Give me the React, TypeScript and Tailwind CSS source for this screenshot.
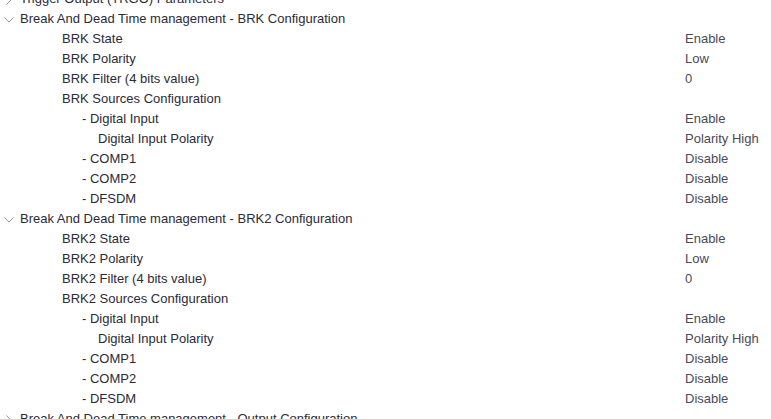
import React from "react";

type Row = { label: string; value?: string; indent: number; header?: "open" | "closed" };

const section = (n: string): Row[] => [
  { label: `${n} State`, value: "Enable", indent: 62 },
  { label: `${n} Polarity`, value: "Low", indent: 62 },
  { label: `${n} Filter (4 bits value)`, value: "0", indent: 62 },
  { label: `${n} Sources Configuration`, indent: 62 },
  { label: "- Digital Input", value: "Enable", indent: 82 },
  { label: "Digital Input Polarity", value: "Polarity High", indent: 98 },
  { label: "- COMP1", value: "Disable", indent: 82 },
  { label: "- COMP2", value: "Disable", indent: 82 },
  { label: "- DFSDM", value: "Disable", indent: 82 },
];

const rows: Row[] = [
  { label: "Trigger Output (TRGO) Parameters", indent: 20, header: "closed" },
  { label: "Break And Dead Time management - BRK Configuration", indent: 20, header: "open" },
  ...section("BRK"),
  { label: "Break And Dead Time management - BRK2 Configuration", indent: 20, header: "open" },
  ...section("BRK2"),
  { label: "Break And Dead Time management - Output Configuration", indent: 20, header: "closed" },
];

function Chevron({ open }: { open: boolean }) {
  return (
    <svg width="12" height="12" viewBox="0 0 12 12" className="absolute left-[3px] top-[5px]">
      {open ? (
        <path d="M1.5 3.5 L6 8 L10.5 3.5" fill="none" stroke="#9a9a9a" strokeWidth="1" />
      ) : (
        <path d="M3.5 1.5 L8 6 L3.5 10.5" fill="none" stroke="#9a9a9a" strokeWidth="1" />
      )}
    </svg>
  );
}

export default function App() {
  return (
    <div
      className="w-[771px] h-[419px] overflow-hidden bg-white text-[13px] text-[#2b2b38]"
      style={{ fontFamily: '"Liberation Sans", Arial, sans-serif' }}
    >
      <div className="-mt-[11px] flex flex-col">
        {rows.map((r, i) => (
          <div key={i} className="relative h-[20px] flex items-center">
            {r.header && <Chevron open={r.header === "open"} />}
            <div className="shrink-0 whitespace-nowrap" style={{ paddingLeft: r.indent }}>
              {r.label}
            </div>
            {r.value && (
              <div className="absolute left-[685px] whitespace-nowrap text-[#4a4a58]">{r.value}</div>
            )}
          </div>
        ))}
      </div>
    </div>
  );
}
